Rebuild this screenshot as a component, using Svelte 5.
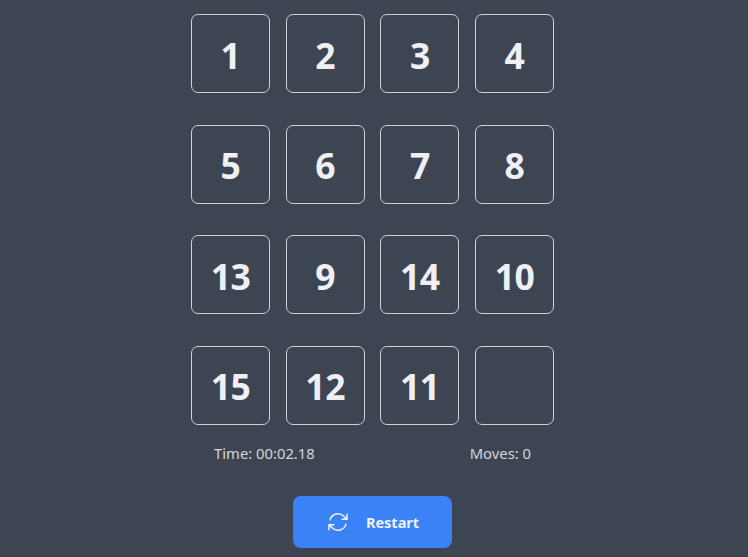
<script>
  const tiles = [1, 2, 3, 4, 5, 6, 7, 8, 13, 9, 14, 10, 15, 12, 11, 0];
  let time = "00:02.18";
  let moves = 0;
</script>

<main class="game">
  <div class="board">
    {#each tiles as tile}
      <div class="tile">{tile || ""}</div>
    {/each}
  </div>

  <div class="stats">
    <span>Time: {time}</span>
    <span>Moves: {moves}</span>
  </div>

  <button class="restart">
    <svg viewBox="0 0 24 24" width="24" height="24" fill="none" stroke="currentColor" stroke-width="1.5" stroke-linecap="round" stroke-linejoin="round">
      <path d="M16.023 9.348h4.992v-.001M2.985 19.644v-4.992m0 0h4.992m-4.993 0 3.181 3.183a8.25 8.25 0 0 0 13.803-3.7M4.031 9.865a8.25 8.25 0 0 1 13.803-3.7l3.181 3.182m0-4.991v4.99" />
    </svg>
    <span>Restart</span>
  </button>
</main>

<style>
  :global(body) {
    background: #3e4552;
    font-family: "Noto Sans", "Open Sans", sans-serif;
  }

  .game {
    width: 745px;
    height: 557px;
    overflow: hidden;
    box-sizing: border-box;
    padding-top: 14px;
    display: flex;
    flex-direction: column;
    align-items: center;
  }

  .board {
    display: grid;
    grid-template-columns: repeat(4, 79px);
    grid-auto-rows: 79px;
    column-gap: 15.67px;
    row-gap: 31.67px;
  }

  .tile {
    box-sizing: border-box;
    border: 1px solid #cdd0d5;
    border-radius: 7px;
    padding-top: 2px;
    display: flex;
    align-items: center;
    justify-content: center;
    color: #eef0f4;
    font-size: 35.5px;
    font-weight: 700;
    letter-spacing: -0.5px;
  }

  .stats {
    width: 317px;
    margin-top: 17px;
    display: flex;
    justify-content: space-between;
    color: #d1d5db;
    font-size: 14.8px;
    line-height: 22px;
  }

  .restart {
    margin-top: 32px;
    width: 159px;
    height: 52px;
    border: none;
    border-radius: 8px;
    background: #3b82f6;
    color: #eef3fb;
    font-family: inherit;
    font-size: 14.5px;
    font-weight: 700;
    display: flex;
    align-items: center;
    justify-content: center;
    gap: 16px;
  }
</style>
